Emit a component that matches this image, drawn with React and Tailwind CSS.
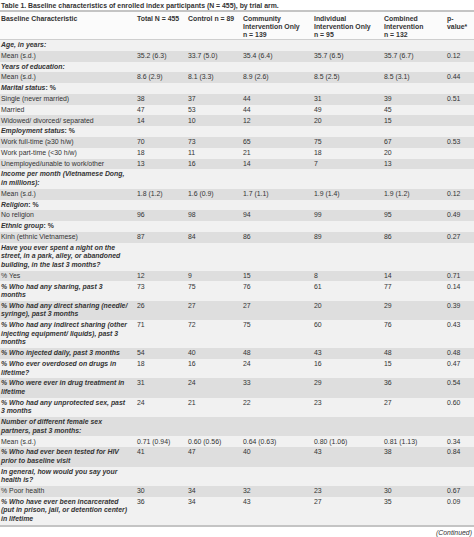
const cols = "grid grid-cols-[137px_51px_55px_71px_70px_63px_1fr]";

const H = ({ children, pct }) => (
  <span className="font-bold">
    <i>{children}</i>
    {pct ? ": %" : ""}
  </span>
);
const Q = ({ children }) => <span className="font-bold italic">{children}</span>;

const rows = [
  { label: <H>Age, in years:</H> },
  { label: "Mean (s.d.)", vals: ["35.2 (6.3)", "33.7 (5.0)", "35.4 (6.4)", "35.7 (6.5)", "35.7 (6.7)", "0.12"] },
  { label: <H>Years of education:</H> },
  { label: "Mean (s.d.)", vals: ["8.6 (2.9)", "8.1 (3.3)", "8.9 (2.6)", "8.5 (2.5)", "8.5 (3.1)", "0.44"] },
  { label: <H pct>Marital status</H> },
  { label: "Single (never married)", vals: ["38", "37", "44", "31", "39", "0.51"] },
  { label: "Married", vals: ["47", "53", "44", "49", "45", ""] },
  { label: "Widowed/ divorced/ separated", vals: ["14", "10", "12", "20", "15", ""] },
  { label: <H pct>Employment status</H> },
  { label: "Work full-time (≥30 h/w)", vals: ["70", "73", "65", "75", "67", "0.53"] },
  { label: "Work part-time (<30 h/w)", vals: ["18", "11", "21", "18", "20", ""] },
  { label: "Unemployed/unable to work/other", vals: ["13", "16", "14", "7", "13", ""] },
  { label: <H>Income per month (Vietnamese Dong,<br />in millions):</H> },
  { label: "Mean (s.d.)", vals: ["1.8 (1.2)", "1.6 (0.9)", "1.7 (1.1)", "1.9 (1.4)", "1.9 (1.2)", "0.12"] },
  { label: <H pct>Religion</H> },
  { label: "No religion", vals: ["96", "98", "94", "99", "95", "0.49"] },
  { label: <H pct>Ethnic group</H> },
  { label: "Kinh (ethnic Vietnamese)", vals: ["87", "84", "86", "89", "86", "0.27"] },
  { label: <Q>Have you ever spent a night on the<br />street, in a park, alley, or abandoned<br />building, in the last 3 months?</Q> },
  { label: "% Yes", vals: ["12", "9", "15", "8", "14", "0.71"] },
  { label: <Q>% Who had any sharing, past 3<br />months</Q>, vals: ["73", "75", "76", "61", "77", "0.14"] },
  { label: <Q>% Who had any direct sharing (needle/<br />syringe), past 3 months</Q>, vals: ["26", "27", "27", "20", "29", "0.39"] },
  { label: <Q>% Who had any indirect sharing (other<br />injecting equipment/ liquids), past 3<br />months</Q>, vals: ["71", "72", "75", "60", "76", "0.43"] },
  { label: <Q>% Who injected daily, past 3 months</Q>, vals: ["54", "40", "48", "43", "48", "0.48"] },
  { label: <Q>% Who ever overdosed on drugs in<br />lifetime?</Q>, vals: ["18", "16", "24", "16", "15", "0.47"] },
  { label: <Q>% Who were ever in drug treatment in<br />lifetime</Q>, vals: ["31", "24", "33", "29", "36", "0.54"] },
  { label: <Q>% Who had any unprotected sex, past<br />3 months</Q>, vals: ["24", "21", "22", "23", "27", "0.60"] },
  { label: <H>Number of different female sex<br />partners, past 3 months:</H> },
  { label: "Mean (s.d.)", vals: ["0.71 (0.94)", "0.60 (0.56)", "0.64 (0.63)", "0.80 (1.06)", "0.81 (1.13)", "0.34"] },
  { label: <Q>% Who had ever been tested for HIV<br />prior to baseline visit</Q>, vals: ["41", "47", "40", "43", "38", "0.84"] },
  { label: <Q>In general, how would you say your<br />health is?</Q> },
  { label: "% Poor health", vals: ["30", "34", "32", "23", "30", "0.67"] },
  { label: <Q>% Who have ever been incarcerated<br />(put in prison, jail, or detention center)<br />in lifetime</Q>, vals: ["36", "34", "43", "27", "35", "0.09"] },
];

const headers = [
  ["Total N = 455"],
  ["Control n = 89"],
  ["Community", "Intervention Only", "n = 139"],
  ["Individual", "Intervention Only", "n = 95"],
  ["Combined", "Intervention", "n = 132"],
  ["p-", "value*"],
];

export default function App() {
  return (
    <div className="w-[474px] h-[537px] bg-white text-[#333] text-[6.9px] font-['Liberation_Sans',Arial,sans-serif] overflow-hidden">
      <div className="font-bold leading-[9px] pt-px pl-px whitespace-nowrap">
        Table 1. Baseline characteristics of enrolled index participants (N = 455), by trial arm.
      </div>
      <div className="h-[2px] bg-[#c4c4c4]" />
      <div className={`${cols} font-bold leading-[8px] pt-[3px] h-[28px] border-b border-[#cfcfcf] bg-[#fbfbfb]`}>
        <div className="pl-px">Baseline Characteristic</div>
        {headers.map((h, i) => (
          <div key={i}>
            {h.map((l, j) => (
              <div key={j} className="whitespace-nowrap">{l}</div>
            ))}
          </div>
        ))}
      </div>
      {rows.map((r, i) => (
        <div
          key={i}
          className={`${cols} leading-[8.6px] py-[1.1px] ${i % 2 ? "bg-[#dedede]" : "bg-[#f1f1f1]"}`}
        >
          <div className="pl-px whitespace-nowrap">{r.label}</div>
          {(r.vals || ["", "", "", "", "", ""]).map((v, j) => (
            <div key={j} className="whitespace-nowrap">{v}</div>
          ))}
        </div>
      ))}
      <div className="h-[2px] bg-[#c4c4c4]" />
      <div className="text-right italic pr-[2px] pt-[1px] leading-[9px]">(Continued)</div>
    </div>
  );
}
